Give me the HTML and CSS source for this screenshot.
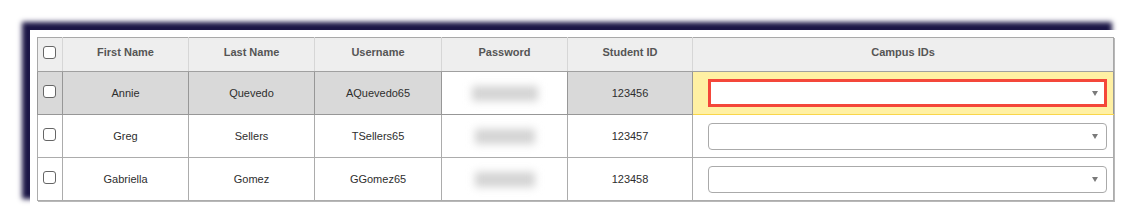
FILE: index.html
```html
<!DOCTYPE html>
<html>
<head>
<meta charset="utf-8">
<link rel="stylesheet" href="styles.css">
</head>
<body>
<div class="panel">
  <table class="grid">
    <colgroup>
      <col class="c-check"><col class="c-name"><col class="c-name"><col class="c-user"><col class="c-name"><col class="c-sid"><col class="c-campus">
    </colgroup>
    <thead>
      <tr class="head">
        <th class="chk"><span class="box"></span></th>
        <th>First Name</th>
        <th>Last Name</th>
        <th>Username</th>
        <th>Password</th>
        <th>Student ID</th>
        <th>Campus IDs</th>
      </tr>
    </thead>
    <tbody>
      <tr class="row selected">
        <td class="chk"><span class="box"></span></td>
        <td>Annie</td>
        <td>Quevedo</td>
        <td>AQuevedo65</td>
        <td class="pw"><span class="blur wide"></span></td>
        <td>123456</td>
        <td class="campus active"><div class="select error"><span class="arrow"></span></div></td>
      </tr>
      <tr class="row">
        <td class="chk"><span class="box"></span></td>
        <td>Greg</td>
        <td>Sellers</td>
        <td>TSellers65</td>
        <td class="pw"><span class="blur"></span></td>
        <td>123457</td>
        <td class="campus"><div class="select"><span class="arrow"></span></div></td>
      </tr>
      <tr class="row">
        <td class="chk"><span class="box"></span></td>
        <td>Gabriella</td>
        <td>Gomez</td>
        <td>GGomez65</td>
        <td class="pw"><span class="blur"></span></td>
        <td>123458</td>
        <td class="campus"><div class="select"><span class="arrow"></span></div></td>
      </tr>
    </tbody>
  </table>
</div>
</body>
</html>
```

FILE: styles.css
```css
html, body {
  margin: 0;
  padding: 0;
  background: #ffffff;
  overflow: hidden;
}
body {
  width: 1124px;
  height: 207px;
  font-family: "Liberation Sans", Arial, sans-serif;
}
.panel {
  margin: 30px 0 0 30px;
  width: 1090px;
  height: 177px;
  background: #ffffff;
  box-shadow: -8px -8px 5px #1b1646;
  padding: 7px 0 0 7px;
  box-sizing: border-box;
}
.grid {
  width: 1076px;
  table-layout: fixed;
  border-collapse: collapse;
  border: 1px solid #a8a8a8;
  box-shadow: 1px 1px 0 #b8b8b8;
}
.c-check { width: 25px; }
.c-name { width: 126px; }
.c-user { width: 127px; }
.c-sid { width: 125px; }
.c-campus { width: 421px; }

.head { height: 34px; background: #eeeeee; }
.head th {
  font-size: 11px;
  font-weight: bold;
  color: #555555;
  text-align: center;
  vertical-align: middle;
  padding: 0 0 6px 0;
  border-left: 1px solid #d6d6d6;
  border-bottom: 1px solid #a0a0a0;
}
.head th:first-child { border-left: none; }

.row { height: 43px; }
.row td {
  font-size: 11px;
  color: #2e2e2e;
  text-align: center;
  vertical-align: middle;
  padding: 0;
  border: 1px solid #acacac;
}
.selected td {
  background: #d9d9d9;
  border-color: #979797;
}
.selected td.pw { background: #ffffff; }
.selected td.campus.active {
  background: #fff0a3;
  border-top: 1px solid #f9d64a;
  border-bottom: 1px solid #f9d64a;
}

.chk { padding: 0 0 4px 0 !important; }
.head .chk { padding: 0 0 6px 0; }
.box {
  display: block;
  width: 11px;
  height: 11px;
  margin: 0 0 0 5px;
  border: 1px solid #666666;
  border-radius: 3px;
  background: #ffffff;
}

.blur {
  display: inline-block;
  width: 60px;
  height: 15px;
  background: #d3d3d3;
  filter: blur(4px);
  vertical-align: middle;
}
.blur.wide { width: 66px; height: 15px; }

.campus { text-align: left !important; padding: 0 6px 0 15px !important; }
.select {
  position: relative;
  height: 25px;
  border: 1px solid #aaaaaa;
  border-radius: 4px;
  background: #ffffff;
}
.select.error {
  height: 22px;
  border: 3px solid #f4473a;
  border-radius: 0;
}
.arrow {
  position: absolute;
  right: 8px;
  top: 50%;
  margin-top: -2px;
  width: 0;
  height: 0;
  border-left: 3px solid transparent;
  border-right: 3px solid transparent;
  border-top: 5px solid #7a7a7a;
}
.select.error .arrow { right: 6px; }
```
